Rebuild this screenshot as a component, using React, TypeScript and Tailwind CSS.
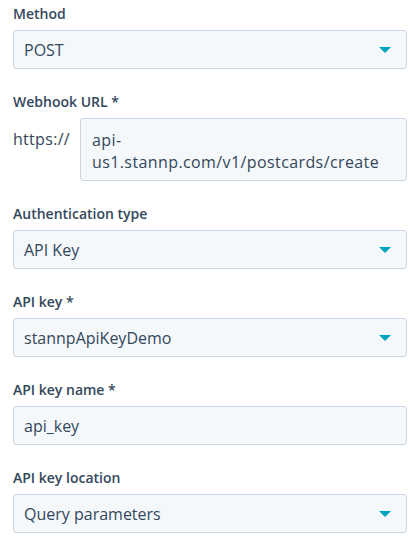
import { ReactNode } from 'react';

const font = { fontFamily: '"Open Sans", "Liberation Sans", sans-serif' };

function Caret() {
  return (
    <svg width="12" height="6" viewBox="0 0 12 6" className="shrink-0">
      <path d="M0 0h12L6 6z" fill="#00a4bd" />
    </svg>
  );
}

function Field({ label, children }: { label: string; children: ReactNode }) {
  return (
    <div className="flex flex-col">
      <div className="h-5 mb-[6px] text-[14px] leading-5 font-semibold text-[#33475b]">{label}</div>
      {children}
    </div>
  );
}

function SelectBox({ value }: { value: string }) {
  return (
    <div className="h-[39px] flex items-center justify-between pl-[10px] pr-[15px] bg-[#f5f8fa] border border-[#cbd6e2] rounded-[3px] text-[16px] text-[#33475b]">
      <span>{value}</span>
      <Caret />
    </div>
  );
}

function TextBox({ value }: { value: string }) {
  return (
    <div className="h-[39px] flex items-center pl-[10px] pr-[15px] bg-[#f5f8fa] border border-[#cbd6e2] rounded-[3px] text-[16px] text-[#33475b]">
      {value}
    </div>
  );
}

export default function App() {
  return (
    <div className="w-[415px] h-[538px] bg-white pl-[13px] pr-[8px] pt-1 flex flex-col gap-[23px]" style={font}>
      <Field label="Method">
        <SelectBox value="POST" />
      </Field>

      <Field label="Webhook URL *">
        <div className="flex items-start gap-[10px]">
          <div className="pt-[10px] text-[16px] leading-[22px] tracking-[0.3px] text-[#33475b]">https://</div>
          <div className="flex-1 h-[63px] pl-[11px] pr-3 pt-[10px] bg-[#f5f8fa] border border-[#cbd6e2] rounded-[3px] text-[16px] leading-[22px] tracking-[0.4px] text-[#33475b]">
            <div>api-</div>
            <div>us1.stannp.com/v1/postcards/create</div>
          </div>
        </div>
      </Field>

      <Field label="Authentication type">
        <SelectBox value="API Key" />
      </Field>

      <Field label="API key *">
        <SelectBox value="stannpApiKeyDemo" />
      </Field>

      <Field label="API key name *">
        <TextBox value="api_key" />
      </Field>

      <Field label="API key location">
        <SelectBox value="Query parameters" />
      </Field>
    </div>
  );
}
